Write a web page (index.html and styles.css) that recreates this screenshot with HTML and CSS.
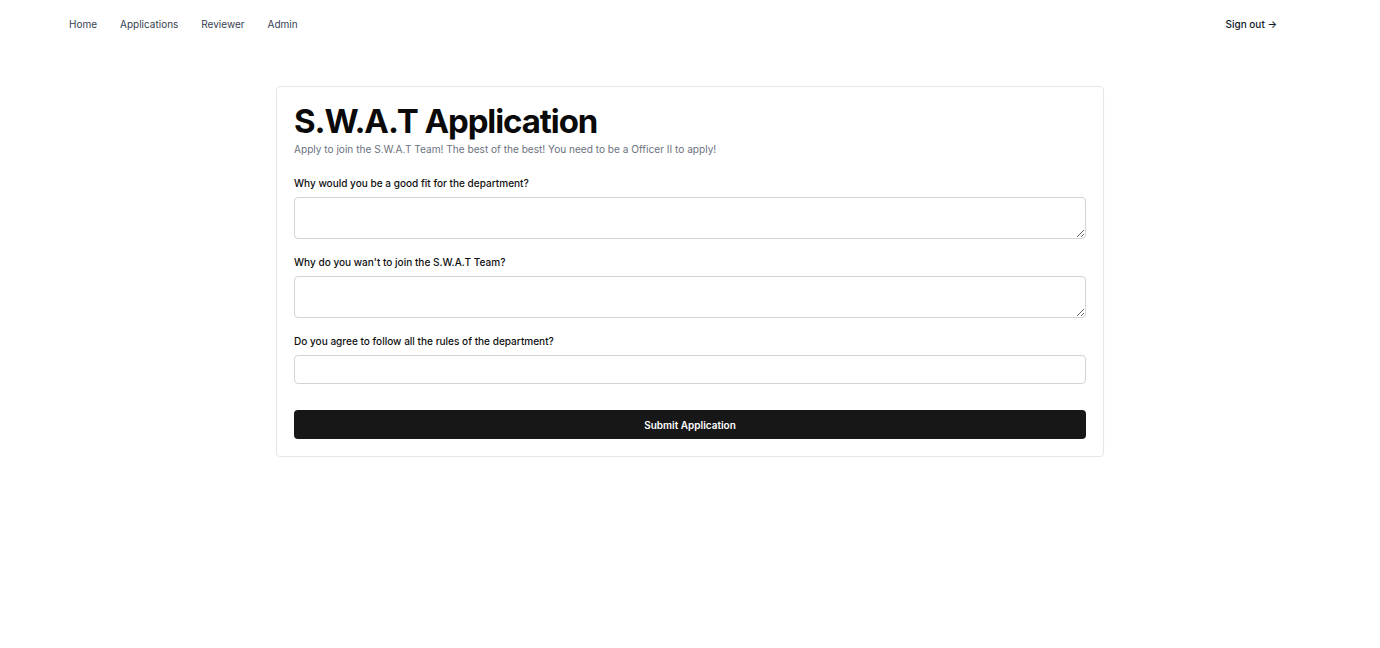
FILE: index.html
```html
<!DOCTYPE html>
<html lang="en">
<head>
<meta charset="utf-8">
<title>S.W.A.T Application</title>
<link rel="stylesheet" href="styles.css">
</head>
<body>
<header class="nav">
  <nav class="nav-links">
    <a href="#">Home</a>
    <a href="#">Applications</a>
    <a href="#">Reviewer</a>
    <a href="#">Admin</a>
  </nav>
  <a class="signout" href="#">Sign out <span class="arrow">&rarr;</span></a>
</header>
<main class="main">
  <section class="card">
    <h1 class="title">S.W.A.T Application</h1>
    <p class="subtitle">Apply to join the S.W.A.T Team! The best of the best! You need to be a Officer II to apply!</p>
    <form class="form">
      <div class="field">
        <label class="label">Why would you be a good fit for the department?</label>
        <textarea class="textarea"></textarea>
      </div>
      <div class="field">
        <label class="label">Why do you wan't to join the S.W.A.T Team?</label>
        <textarea class="textarea"></textarea>
      </div>
      <div class="field">
        <label class="label">Do you agree to follow all the rules of the department?</label>
        <input class="input" type="text">
      </div>
      <button class="submit" type="button">Submit Application</button>
    </form>
  </section>
</main>
</body>
</html>
```
FILE: styles.css
```css
* { box-sizing: border-box; }
html, body { margin: 0; padding: 0; background: #fff; }
body {
  font-family: Inter, "Noto Sans", sans-serif;
  color: #111827;
  font-size: 10px;
}
a { text-decoration: none; }
.nav {
  display: flex;
  justify-content: space-between;
  align-items: center;
  height: 48px;
  padding: 0 103px 0 69px;
}
.nav-links { display: flex; gap: 23px; }
.nav-links a { color: #374151; font-size: 10px; }
.signout { color: #111827; font-size: 10px; font-weight: 500; }
.main { display: flex; justify-content: center; padding-top: 38px; }
.card {
  width: 828px;
  border: 1px solid #e5e7eb;
  border-radius: 4px;
  padding: 14px 17px 17px;
  box-shadow: 0 1px 2px rgba(0,0,0,0.03);
}
.title {
  margin: 0;
  font-size: 33px;
  font-weight: 700;
  letter-spacing: -0.033em;
  line-height: 40px;
  color: #0a0a0a;
}
.subtitle { margin: 0; color: #6b7280; font-size: 10.1px; line-height: 16px; }
.form { margin-top: 18px; }
.field { display: flex; flex-direction: column; gap: 6px; margin-bottom: 15px; }
.label { font-size: 10.05px; font-weight: 500; line-height: 16px; color: #111; }
.textarea {
  height: 42px;
  border: 1px solid #d4d4d8;
  border-radius: 4px;
  resize: vertical;
  font-family: inherit;
}
.input {
  height: 29px;
  border: 1px solid #d4d4d8;
  border-radius: 4px;
  font-family: inherit;
}
.submit {
  display: block;
  width: 100%;
  height: 29px;
  margin-top: 26px;
  background: #171717;
  color: #fff;
  border: none;
  border-radius: 4px;
  font-family: inherit;
  font-size: 10px;
  font-weight: 600;
}
.form .field:last-of-type { margin-bottom: 0; }
```
